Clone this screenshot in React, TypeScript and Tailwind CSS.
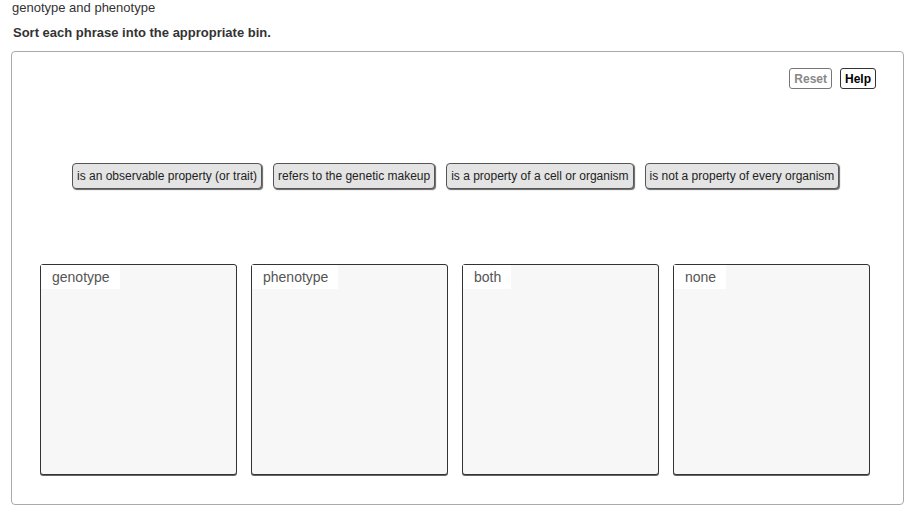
const PHRASES = [
  'is an observable property (or trait)',
  'refers to the genetic makeup',
  'is a property of a cell or organism',
  'is not a property of every organism',
];

const BINS = ['genotype', 'phenotype', 'both', 'none'];

function Chip({ text }: { text: string }) {
  return (
    <div className="flex h-[26px] items-center rounded-[4px] border border-[#555] bg-[#e4e4e4] px-[4px] text-[12px] leading-[14px] text-[#222] shadow-[1px_1px_1px_#666]">
      {text}
    </div>
  );
}

function Bin({ label }: { label: string }) {
  return (
    <div className="flex h-[211px] w-[197px] flex-col items-start rounded-[3px] border border-[#333] bg-[#f7f7f7] shadow-[0_1px_0_#666]">
      <span className="h-[24px] bg-white pl-[11px] pr-[10px] text-[14px] leading-[24px] text-[#555]">{label}</span>
    </div>
  );
}

export default function App() {
  return (
    <div className="h-[513px] w-[918px] bg-white font-['Liberation_Sans',Arial,sans-serif] text-[#333]">
      <div className="pl-[12px] text-[13px] leading-[15px]">genotype and phenotype</div>
      <div className="mt-[10px] pl-[13px] text-[13px] font-bold leading-[15px]">
        Sort each phrase into the appropriate bin.
      </div>

      <div className="ml-[11px] mt-[11px] h-[454px] w-[893px] rounded-[4px] border border-[#aaa]">
        <div className="flex justify-end gap-[8px] pr-[27px] pt-[16px]">
          <button className="h-[21px] rounded-[3px] border border-[#777] px-[4px] text-[12px] font-bold text-[#888]">
            Reset
          </button>
          <button className="h-[21px] rounded-[3px] border border-[#333] px-[4px] text-[12px] font-bold text-black">
            Help
          </button>
        </div>

        <div className="mt-[74px] flex gap-[11px] pl-[60px]">
          {PHRASES.map((p) => (
            <Chip key={p} text={p} />
          ))}
        </div>

        <div className="mt-[75px] flex gap-[14px] pl-[28px]">
          {BINS.map((b) => (
            <Bin key={b} label={b} />
          ))}
        </div>
      </div>
    </div>
  );
}
